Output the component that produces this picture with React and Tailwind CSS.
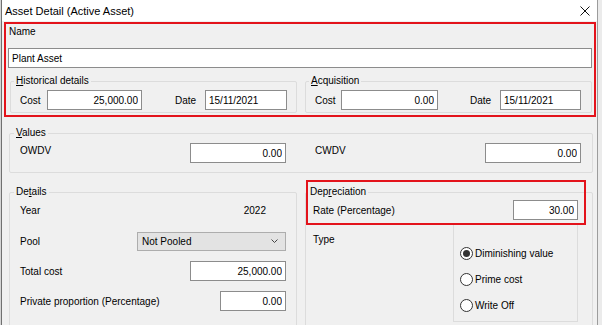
import React from 'react';

const box = "h-[20px] bg-white border border-[#8c8c8c] text-[10px] px-[3px] outline-none";
const group = "border border-[#dcdcdc] rounded-[2px] min-w-0";

function Legend({ pre, u, post, className = "ml-[3px]" }) {
  return (
    <legend className={`${className} px-[2px] leading-[14px]`}>
      {pre}
      <span className="underline underline-offset-[1px] decoration-[1px]">{u}</span>
      {post}
    </legend>
  );
}

function Radio({ label, checked }) {
  return (
    <div className="h-[26px] flex items-center pl-[6px] gap-[2px]">
      <span className="w-[13px] h-[13px] rounded-full border border-[#333] bg-white flex items-center justify-center">
        {checked && <span className="w-[7px] h-[7px] rounded-full bg-[#333]" />}
      </span>
      <span>{label}</span>
    </div>
  );
}

export default function App() {
  return (
    <div className="w-[602px] h-[325px] overflow-hidden flex bg-[#e9e9e9] text-black text-[10px] font-['Liberation_Sans',Arial,sans-serif]">
      {/* left window edge */}
      <div className="w-[2px] shrink-0 flex">
        <div className="w-px bg-[#d4d4d4]" />
        <div className="w-px bg-[#707070]" />
      </div>

      <div className="w-[596px] shrink-0 flex flex-col bg-[#f0f0f0] border-r border-[#9c9c9c]">
        {/* title bar */}
        <div className="h-[21px] shrink-0 bg-white flex items-center justify-between pl-[3px] pr-[7px]">
          <span className="text-[11px] leading-[14px]">Asset Detail (Active Asset)</span>
          <svg width="10" height="10" viewBox="0 0 10 10" className="shrink-0">
            <path d="M0.5 0.5 L9.5 9.5 M9.5 0.5 L0.5 9.5" stroke="#111" strokeWidth="1" fill="none" />
          </svg>
        </div>

        {/* name + historical / acquisition */}
        <div className="mt-[1px] ml-[2px] w-[592px] border-2 border-[#e3131b] pt-[1px] pb-[2px] flex flex-col">
          <div className="pl-[3px] leading-[14px]">Name</div>
          <input readOnly defaultValue="Plant Asset" className={`${box} mt-[9px] ml-[2px] w-[584px]`} />
          <div className="mt-[6px] ml-[4px] flex gap-[8px]">
            <fieldset className={`${group} w-[287px]`}>
              <Legend u="H" post="istorical details" />
              <div className="flex items-center pt-[2px] pb-[2px] pl-[9px]">
                <span className="w-[27px]">Cost</span>
                <input readOnly defaultValue="25,000.00" className={`${box} w-[95px] text-right`} />
                <span className="ml-[33px] w-[30px]">Date</span>
                <input readOnly defaultValue="15/11/2021" className={`${box} w-[82px] px-[2px]`} />
              </div>
            </fieldset>
            <fieldset className={`${group} w-[287px]`}>
              <Legend u="A" post="cquisition" />
              <div className="flex items-center pt-[2px] pb-[2px] pl-[9px]">
                <span className="w-[26px]">Cost</span>
                <input readOnly defaultValue="0.00" className={`${box} w-[97px] text-right`} />
                <span className="ml-[32px] w-[30px]">Date</span>
                <input readOnly defaultValue="15/11/2021" className={`${box} w-[81px] px-[2px]`} />
              </div>
            </fieldset>
          </div>
        </div>

        {/* values */}
        <fieldset className={`${group} mt-[9px] ml-[7px] w-[584px] shrink-0`}>
          <Legend u="V" post="alues" className="ml-[4px]" />
          <div className="flex items-start pt-[3px] pb-[9px] pl-[10px]">
            <span className="w-[170px] mt-[1px] leading-[14px]">OWDV</span>
            <input readOnly defaultValue="0.00" className={`${box} w-[96px] text-right`} />
            <span className="ml-[29px] w-[170px] mt-[1px] leading-[14px]">CWDV</span>
            <input readOnly defaultValue="0.00" className={`${box} w-[96px] text-right`} />
          </div>
        </fieldset>

        {/* details + depreciation */}
        <div className="mt-[12px] ml-[7px] flex gap-[8px]">
          <fieldset className={`${group} w-[288px] pb-[20px]`}>
            <Legend pre="De" u="t" post="ails" className="ml-[4px]" />
            <div className="h-[22px] flex items-center justify-between pl-[10px] pr-[30px]">
              <span>Year</span>
              <span>2022</span>
            </div>
            <div className="mt-[5px] h-[30px] flex items-center justify-between pl-[10px] pr-[10px]">
              <span>Pool</span>
              <div className="w-[149px] h-[19px] bg-[#e3e3e3] border border-[#adadad] flex items-center justify-between pl-[4px] pr-[7px]">
                <span>Not Pooled</span>
                <svg width="7" height="4" viewBox="0 0 7 4">
                  <path d="M0.5 0.5 L3.5 3.5 L6.5 0.5" stroke="#444" strokeWidth="1" fill="none" />
                </svg>
              </div>
            </div>
            <div className="h-[30px] flex items-center justify-between pl-[10px] pr-[10px]">
              <span>Total cost</span>
              <input readOnly defaultValue="25,000.00" className={`${box} w-[96px] text-right`} />
            </div>
            <div className="h-[30px] flex items-center justify-between pl-[10px] pr-[10px]">
              <span>Private proportion (Percentage)</span>
              <input readOnly defaultValue="0.00" className={`${box} w-[66px] text-right`} />
            </div>
          </fieldset>

          <div className="relative w-[288px]">
            <fieldset className={`${group} w-[288px] pb-[12px]`}>
              <Legend pre="Dep" u="r" post="eciation" className="ml-[2px]" />
              <div className="h-[22px] flex items-center justify-between pl-[7px] pr-[14px]">
                <span>Rate (Percentage)</span>
                <input readOnly defaultValue="30.00" className={`${box} w-[65px] text-right`} />
              </div>
              <div className="mt-[2px] flex pl-[7px] pr-[14px]">
                <span className="mt-[10px] leading-[14px]">Type</span>
                <div className="ml-auto w-[125px] h-[99px] border border-[#dcdcdc] pt-[16px] flex flex-col">
                  <Radio label="Diminishing value" checked />
                  <Radio label="Prime cost" />
                  <Radio label="Write Off" />
                </div>
              </div>
            </fieldset>
            {/* red highlight drawn over the depreciation rate */}
            <div className="absolute left-[1px] top-[-5px] w-[280px] h-[45px] border-2 border-[#e3131b] pointer-events-none" />
          </div>
        </div>
      </div>

      <div className="flex-1 bg-[#ebebeb]" />
    </div>
  );
}
